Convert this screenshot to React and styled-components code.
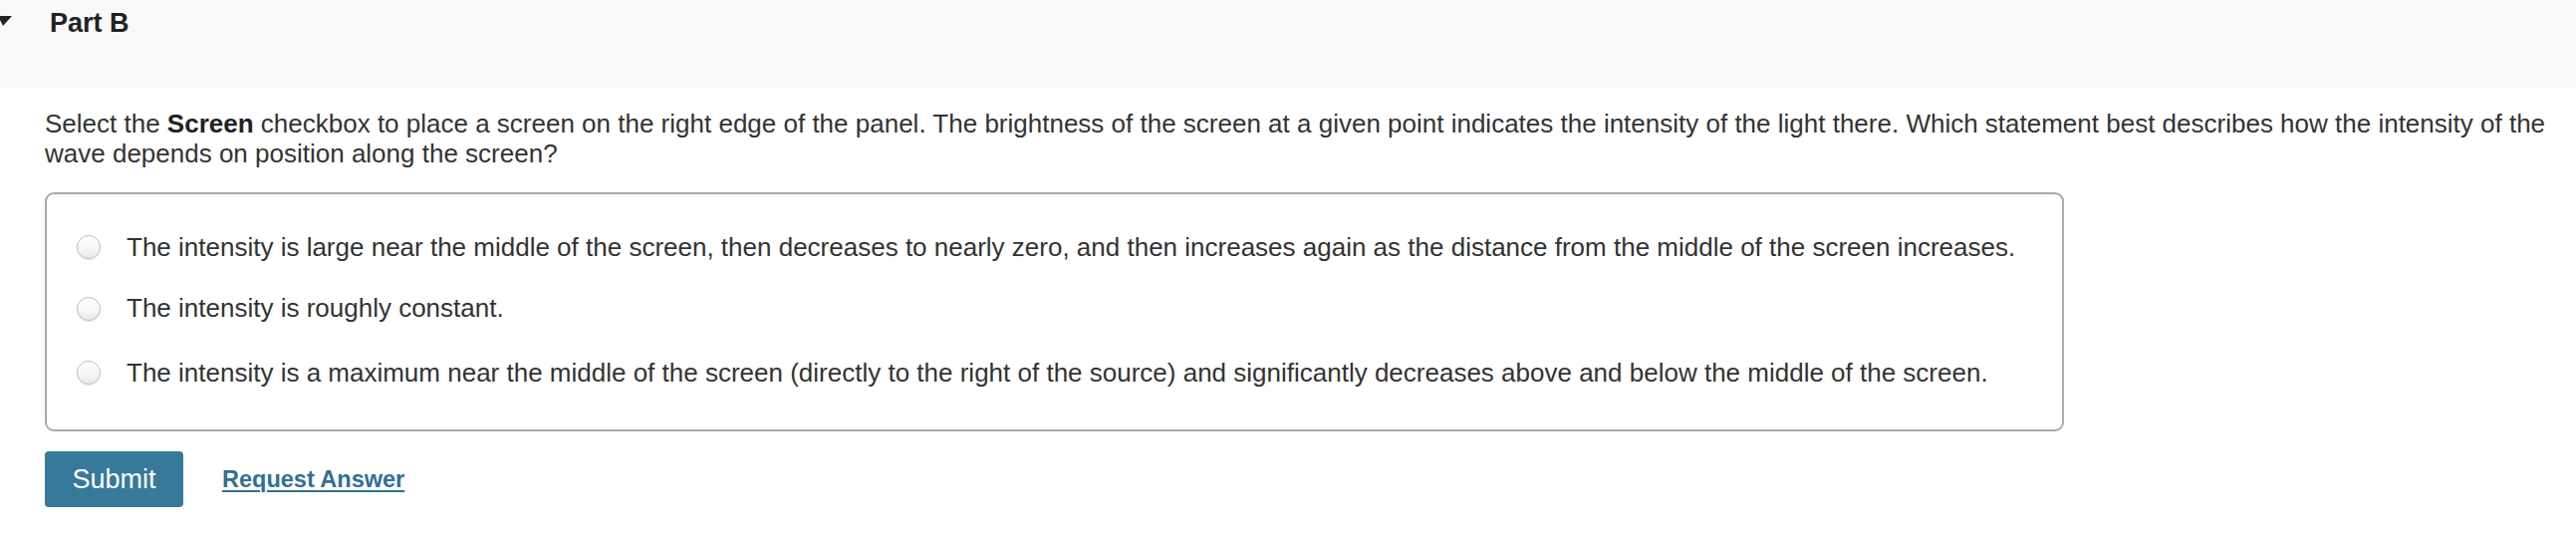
import React from "react";
import styled, { createGlobalStyle } from "styled-components";

const GlobalStyle = createGlobalStyle`
  html, body {
    margin: 0;
    padding: 0;
    background: #ffffff;
  }
  body {
    font-family: "Liberation Sans", Arial, Helvetica, sans-serif;
    color: #333333;
  }
`;

const Page = styled.div`
  width: 2586px;
  min-height: 540px;
  background: #ffffff;
`;

const PartHeader = styled.header`
  display: flex;
  align-items: flex-start;
  gap: 38px;
  height: 88px;
  box-sizing: border-box;
  padding-top: 7px;
  background: #f9f9f9;
`;

const Caret = styled.svg`
  flex: none;
  width: 14px;
  height: 12px;
  margin-top: 9px;
  margin-left: -2px;
`;

const PartTitle = styled.h2`
  margin: 0;
  font-size: 27px;
  line-height: 32px;
  font-weight: 700;
  color: #222222;
`;

const Body = styled.section`
  padding: 21px 26px 0 45px;
`;

const Prompt = styled.p`
  margin: 0;
  font-size: 26px;
  line-height: 30px;
  color: #333333;

  strong {
    font-weight: 700;
    color: #222222;
  }
`;

const OptionBox = styled.fieldset`
  margin: 24px 0 0 0;
  width: 2027px;
  box-sizing: border-box;
  border: 2px solid #a9a9a9;
  border-radius: 9px;
  padding: 23px 0 24px 30px;
  min-inline-size: 0;
`;

const OptionRow = styled.label`
  display: flex;
  align-items: center;
  gap: 26px;
  height: ${(p) => p.$h}px;
  font-size: 26px;
  color: #333333;
  cursor: pointer;
`;

const Radio = styled.input.attrs({ type: "radio" })`
  appearance: none;
  -webkit-appearance: none;
  flex: none;
  margin: 0;
  width: 24px;
  height: 24px;
  border-radius: 50%;
  border: 1px solid #bdbdbd;
  background: linear-gradient(180deg, #ffffff 0%, #f7f7f7 55%, #e9e9e9 100%);
  box-shadow: inset 0 1px 1px rgba(255, 255, 255, 0.9), 0 1px 1px rgba(0, 0, 0, 0.1);
`;

const Actions = styled.div`
  display: flex;
  align-items: center;
  gap: 39px;
  margin-top: 20px;
`;

const SubmitButton = styled.button`
  width: 139px;
  height: 56px;
  border: none;
  border-radius: 4px;
  background: #37799b;
  color: #ffffff;
  font-family: inherit;
  font-size: 27px;
  padding: 0;
  cursor: pointer;
`;

const RequestLink = styled.a`
  font-size: 23.5px;
  font-weight: 700;
  color: #2f7095;
  text-decoration: underline;
  text-decoration-thickness: 2px;
  text-underline-offset: 3px;
  cursor: pointer;
`;

const options = [
  {
    h: 60,
    text: "The intensity is large near the middle of the screen, then decreases to nearly zero, and then increases again as the distance from the middle of the screen increases.",
  },
  { h: 63, text: "The intensity is roughly constant." },
  {
    h: 66,
    text: "The intensity is a maximum near the middle of the screen (directly to the right of the source) and significantly decreases above and below the middle of the screen.",
  },
];

export default function App() {
  return (
    <Page>
      <GlobalStyle />
      <PartHeader>
        <Caret viewBox="0 0 14 12">
          <polygon points="0,0 14,0 5,10" fill="#222" />
        </Caret>
        <PartTitle>Part B</PartTitle>
      </PartHeader>
      <Body>
        <Prompt>
          Select the <strong>Screen</strong> checkbox to place a screen on the right edge of the panel. The brightness of the screen at a given point indicates the intensity of the light there. Which statement best describes how the intensity of the wave depends on position along the screen?
        </Prompt>
        <OptionBox>
          {options.map((o, i) => (
            <OptionRow key={i} $h={o.h}>
              <Radio name="partB" />
              <span>{o.text}</span>
            </OptionRow>
          ))}
        </OptionBox>
        <Actions>
          <SubmitButton>Submit</SubmitButton>
          <RequestLink>Request Answer</RequestLink>
        </Actions>
      </Body>
    </Page>
  );
}
